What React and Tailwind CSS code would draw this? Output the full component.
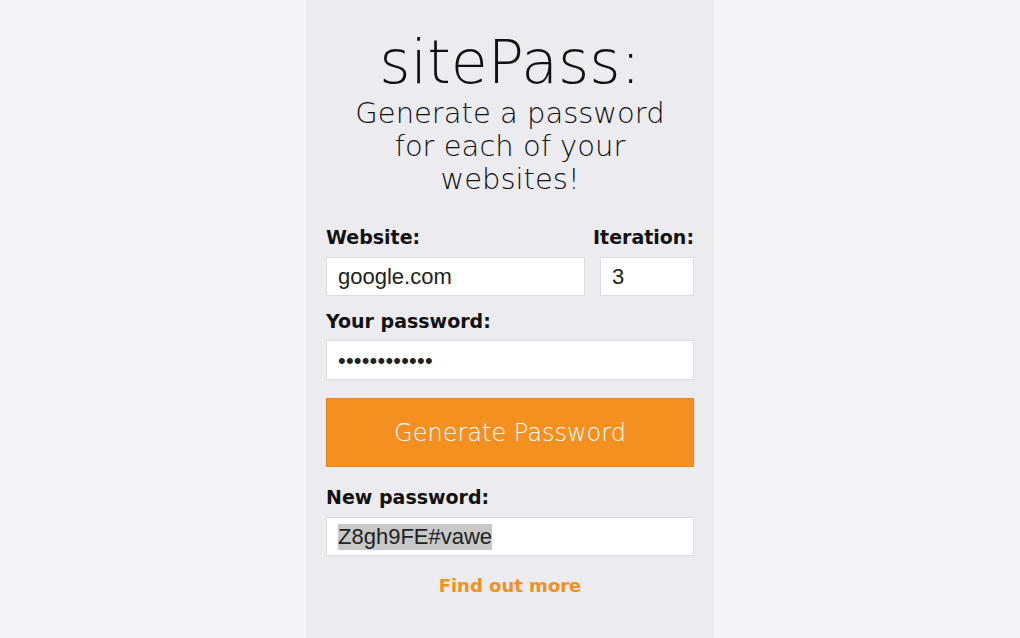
import React from 'react';

const label = "text-[19px] font-bold text-[#111] leading-none font-['DejaVu_Sans',sans-serif]";
const field = "h-[39px] bg-white border border-[#dcdce0] px-[11px] flex items-center text-[22px] text-[#222] font-['Liberation_Sans',Arial,sans-serif]";

const App = () => {
  return (
    <div className="w-[1020px] h-[638px] bg-[#f4f4f6] flex justify-center overflow-hidden">
      <div className="w-[408px] h-full bg-[#ebebf0] flex flex-col px-[20px] font-['DejaVu_Sans',sans-serif]">
        <h1 className="mt-[27px] text-center text-[60px] font-extralight leading-[70px] text-[#111]">sitePass:</h1>
        <p className="text-center text-[29px] font-extralight leading-[33px] text-[#111]">
          Generate a password
          <br />
          for each of your
          <br />
          websites!
        </p>

        <div className="mt-[32px] flex gap-[15px]">
          <div className="flex-1 flex flex-col">
            <span className={label}>Website:</span>
            <div className={`${field} mt-[10px]`}>google.com</div>
          </div>
          <div className="w-[94px] flex flex-col items-end">
            <span className={`${label} whitespace-nowrap`}>Iteration:</span>
            <div className={`${field} mt-[10px] w-full`}>3</div>
          </div>
        </div>

        <span className={`${label} mt-[16px]`}>Your password:</span>
        <div className={`${field} mt-[9px] h-[40px]`}>
          <span className="tracking-[0.2px]">••••••••••••</span>
        </div>

        <button className="mt-[18px] h-[69px] bg-[#f39020] border border-[#e5851a] text-white text-[24px] font-extralight">
          Generate Password
        </button>

        <span className={`${label} mt-[21px]`}>New password:</span>
        <div className={`${field} mt-[10px]`}>
          <span className="bg-[#c8c8c8] leading-[26px]">Z8gh9FE#vawe</span>
        </div>

        <a className="mt-[16px] text-center text-[18px] font-bold text-[#f39020]">Find out more</a>
      </div>
    </div>
  );
};

export default App;
